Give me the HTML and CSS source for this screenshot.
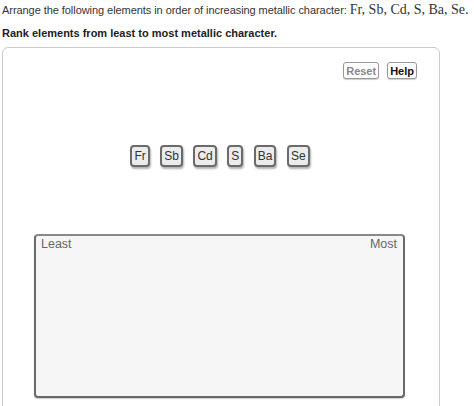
FILE: index.html
```html
<!DOCTYPE html>
<html>
<head>
<meta charset="utf-8">
<link rel="stylesheet" href="styles.css">
</head>
<body>
<p class="q">Arrange the following elements in order of increasing metallic character: <span class="math">Fr, Sb, Cd, S, Ba, Se.</span></p>
<p class="inst">Rank elements from least to most metallic character.</p>
<div class="panel">
  <div class="tools">
    <button class="btn reset">Reset</button>
    <button class="btn help">Help</button>
  </div>
  <div class="chips">
    <span class="chip">Fr</span>
    <span class="chip">Sb</span>
    <span class="chip">Cd</span>
    <span class="chip">S</span>
    <span class="chip">Ba</span>
    <span class="chip">Se</span>
  </div>
  <div class="rank">
    <div class="labels"><span>Least</span><span>Most</span></div>
  </div>
</div>
</body>
</html>
```
FILE: styles.css
```css
html, body { margin: 0; padding: 0; background: #fff; }
body {
  font-family: "Liberation Sans", Arial, sans-serif;
  color: #333;
  width: 474px;
  height: 406px;
  overflow: hidden;
}
.q {
  margin: 0;
  padding: 1px 0 0 2px;
  font-size: 11px;
  letter-spacing: -0.06px;
  line-height: 18px;
  color: #333;
  white-space: nowrap;
}
.math {
  font-family: "Liberation Serif", "Times New Roman", serif;
  font-size: 14px;
  letter-spacing: 0;
}
.inst {
  margin: 0;
  padding: 6px 0 0 2px;
  font-size: 11px;
  line-height: 16px;
  font-weight: bold;
  color: #222;
}
.panel {
  margin: 6px 0 0 2px;
  width: 438px;
  height: 400px;
  border: 1px solid #ccc;
  border-radius: 6px;
  box-sizing: border-box;
  padding-top: 14px;
}
.tools {
  display: flex;
  justify-content: flex-end;
  gap: 8px;
  padding-right: 22px;
}
.btn {
  font-family: "Liberation Sans", Arial, sans-serif;
  font-size: 11px;
  height: 17px;
  padding: 0 2px;
  border: 1px solid #999;
  border-radius: 3px;
  background: #fff;
  box-shadow: 0 1px 1px rgba(0,0,0,0.2);
  line-height: 14px;
}
.reset { color: #888; font-weight: bold; }
.help { color: #111; font-weight: bold; }
.chips {
  display: flex;
  justify-content: center;
  gap: 10.5px;
  margin-top: 66px;
  padding-right: 2px;
}
.chip {
  display: inline-flex;
  align-items: center;
  justify-content: center;
  height: 22px;
  padding: 0 2px;
  box-sizing: border-box;
  border: 2px solid #6b6b6b;
  border-radius: 4px;
  background: #ececec;
  font-size: 12px;
  color: #333;
  box-shadow: 1px 2px 2px rgba(0,0,0,0.3);
}
.rank {
  margin: 67px 0 0 31px;
  width: 371px;
  height: 164px;
  border: 2px solid #6a6a6a;
  border-top-color: #888;
  border-radius: 4px;
  background: #f6f6f6;
  box-sizing: border-box;
  box-shadow: 0 1px 1px rgba(0,0,0,0.2);
}
.labels {
  display: flex;
  justify-content: space-between;
  padding: 2px 6px 0 5px;
  font-size: 12.5px;
  line-height: 12px;
  color: #666;
}
```
